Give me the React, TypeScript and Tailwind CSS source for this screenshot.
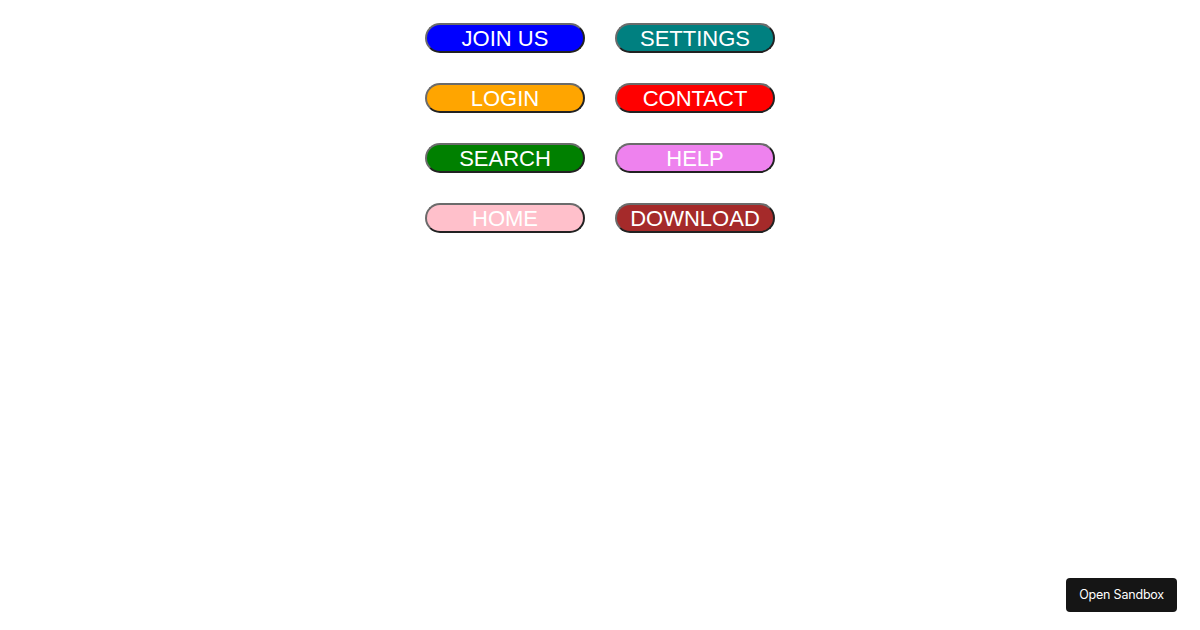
const buttons = [
  { label: "JOIN US", color: "bg-[#0000ff]" },
  { label: "SETTINGS", color: "bg-[#008080]" },
  { label: "LOGIN", color: "bg-[#ffa500]" },
  { label: "CONTACT", color: "bg-[#ff0000]" },
  { label: "SEARCH", color: "bg-[#008000]" },
  { label: "HELP", color: "bg-[#ee82ee]" },
  { label: "HOME", color: "bg-[#ffc0cb]" },
  { label: "DOWNLOAD", color: "bg-[#a52a2a]" },
];

export default function App() {
  return (
    <div className="min-h-screen bg-white font-['Liberation_Sans',Arial,sans-serif]">
      <div className="flex justify-center pt-[23px]">
        <div className="grid grid-cols-[160px_160px] gap-x-[30px] gap-y-[30px]">
          {buttons.map((b) => (
            <button
              key={b.label}
              type="button"
              className={`${b.color} h-[30px] w-[160px] rounded-full border-2 border-t-[#6b6b6b] border-l-[#6b6b6b] border-b-[#222222] border-r-[#222222] pt-[2px] text-[22px] leading-none text-white`}
            >
              {b.label}
            </button>
          ))}
        </div>
      </div>
      <a
        href="#"
        className="fixed bottom-[18px] right-[23px] flex h-[34px] items-center rounded-[4px] bg-[#151515] px-[13px] font-['Inter',sans-serif] text-[12.5px] tracking-[-0.2px] text-white"
      >
        Open Sandbox
      </a>
    </div>
  );
}
